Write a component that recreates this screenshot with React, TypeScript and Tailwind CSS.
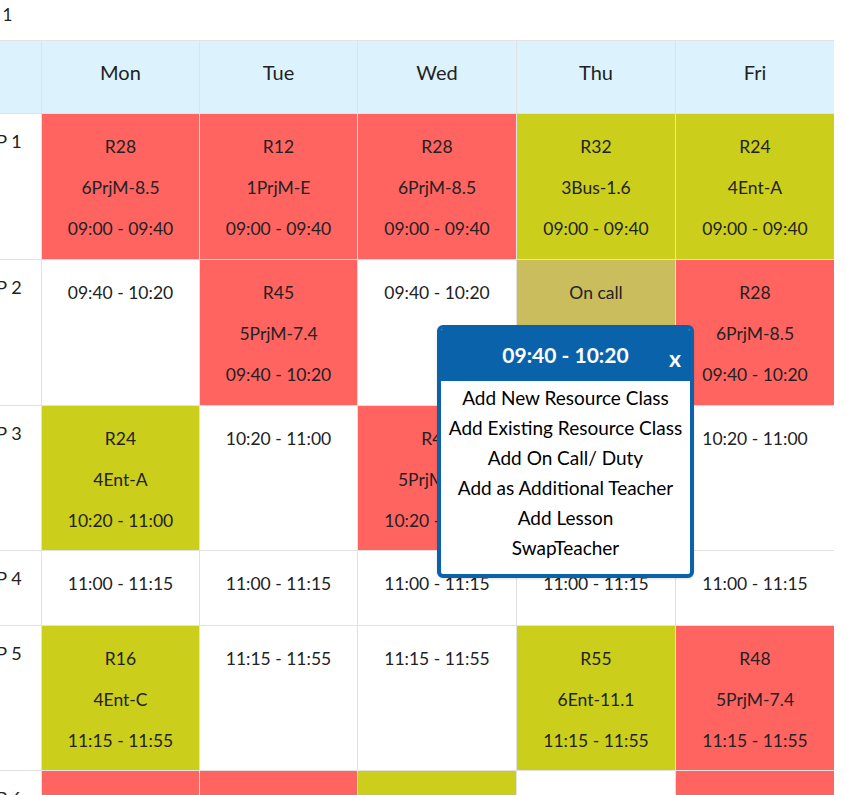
import React from "react"

type Cell = { kind: "red" | "green" | "oncall" | "free"; room?: string; group?: string; time?: string }

const days = ["Mon", "Tue", "Wed", "Thu", "Fri"]

const rows: { label: string; height: string; cells: Cell[] }[] = [
    {
        label: "P 1",
        height: "h-[145px]",
        cells: [
            { kind: "red", room: "R28", group: "6PrjM-8.5", time: "09:00 - 09:40" },
            { kind: "red", room: "R12", group: "1PrjM-E", time: "09:00 - 09:40" },
            { kind: "red", room: "R28", group: "6PrjM-8.5", time: "09:00 - 09:40" },
            { kind: "green", room: "R32", group: "3Bus-1.6", time: "09:00 - 09:40" },
            { kind: "green", room: "R24", group: "4Ent-A", time: "09:00 - 09:40" },
        ],
    },
    {
        label: "P 2",
        height: "h-[145px]",
        cells: [
            { kind: "free", time: "09:40 - 10:20" },
            { kind: "red", room: "R45", group: "5PrjM-7.4", time: "09:40 - 10:20" },
            { kind: "free", time: "09:40 - 10:20" },
            { kind: "oncall" },
            { kind: "red", room: "R28", group: "6PrjM-8.5", time: "09:40 - 10:20" },
        ],
    },
    {
        label: "P 3",
        height: "h-[144px]",
        cells: [
            { kind: "green", room: "R24", group: "4Ent-A", time: "10:20 - 11:00" },
            { kind: "free", time: "10:20 - 11:00" },
            { kind: "red", room: "R45", group: "5PrjM-7.4", time: "10:20 - 11:00" },
            { kind: "free", time: "10:20 - 11:00" },
            { kind: "free", time: "10:20 - 11:00" },
        ],
    },
    {
        label: "P 4",
        height: "h-[74px]",
        cells: [
            { kind: "free", time: "11:00 - 11:15" },
            { kind: "free", time: "11:00 - 11:15" },
            { kind: "free", time: "11:00 - 11:15" },
            { kind: "free", time: "11:00 - 11:15" },
            { kind: "free", time: "11:00 - 11:15" },
        ],
    },
    {
        label: "P 5",
        height: "h-[144px]",
        cells: [
            { kind: "green", room: "R16", group: "4Ent-C", time: "11:15 - 11:55" },
            { kind: "free", time: "11:15 - 11:55" },
            { kind: "free", time: "11:15 - 11:55" },
            { kind: "green", room: "R55", group: "6Ent-11.1", time: "11:15 - 11:55" },
            { kind: "red", room: "R48", group: "5PrjM-7.4", time: "11:15 - 11:55" },
        ],
    },
    {
        label: "P 6",
        height: "h-[145px]",
        cells: [
            { kind: "red", room: "R28", group: "6PrjM-8.5", time: "11:55 - 12:35" },
            { kind: "red", room: "R12", group: "1PrjM-E", time: "11:55 - 12:35" },
            { kind: "green", room: "R24", group: "4Ent-A", time: "11:55 - 12:35" },
            { kind: "free", time: "11:55 - 12:35" },
            { kind: "red", room: "R28", group: "6PrjM-8.5", time: "11:55 - 12:35" },
        ],
    },
]

const bg = {
    red: "bg-[#ff6461]",
    green: "bg-[#cbcf1c]",
    oncall: "bg-[#cabd5e]",
    free: "bg-white",
}

const menu = [
    "Add New Resource Class",
    "Add Existing Resource Class",
    "Add On Call/ Duty",
    "Add as Additional Teacher",
    "Add Lesson",
    "SwapTeacher",
]

const TimetableCell = ({ cell }: { cell: Cell }) => {
    return (
        <div className={`${bg[cell.kind]} flex flex-col items-center gap-[21px] pt-[23px] text-[17.5px] leading-[20px]`}>
            {cell.kind === "oncall" && <span>On call</span>}
            {cell.room && <span>{cell.room}</span>}
            {cell.group && <span>{cell.group}</span>}
            {cell.time && <span>{cell.time}</span>}
        </div>
    )
}

export default function App() {
    return (
        <div className="relative w-[865px] h-[795px] overflow-hidden bg-white text-[#222] font-['Lato','Liberation_Sans',sans-serif]">
            <div className="h-[40px] -ml-[45px] pt-[5px] text-[17px] leading-[20px]">Week 1</div>
            <div className="-ml-[23px] w-[857px] grid grid-cols-[64px_157px_157px_158px_158px_158px] gap-px bg-[#e2e2e2] border-y border-[#e2e2e2]">
                <div className="bg-[#dcf3fd] h-[72px]" />
                {days.map((d) => (
                    <div key={d} className="bg-[#dcf3fd] h-[72px] flex items-center justify-center pb-[10px] text-[20px]">
                        {d}
                    </div>
                ))}
                {rows.map((r) => (
                    <React.Fragment key={r.label}>
                        <div className={`${r.height} bg-white text-center pt-[17px] text-[18px] leading-[20px]`}>{r.label}</div>
                        {r.cells.map((c, i) => (
                            <TimetableCell key={i} cell={c} />
                        ))}
                    </React.Fragment>
                ))}
            </div>

            <div className="absolute left-[437px] top-[325px] w-[257px] border-4 border-[#0a63aa] rounded-[6px] bg-white overflow-hidden shadow-sm">
                <div className="relative bg-[#0a63aa] h-[52px] flex items-center justify-center text-white font-bold text-[21px]">
                    09:40 - 10:20
                    <span className="absolute right-[9px] top-[16px] text-[23px] leading-[26px]">x</span>
                </div>
                <div className="flex flex-col items-center pt-[2px] pb-[11px] text-[19px] leading-[30px] text-black">
                    {menu.map((m) => (
                        <span key={m} className="whitespace-nowrap">{m}</span>
                    ))}
                </div>
            </div>
        </div>
    )
}
